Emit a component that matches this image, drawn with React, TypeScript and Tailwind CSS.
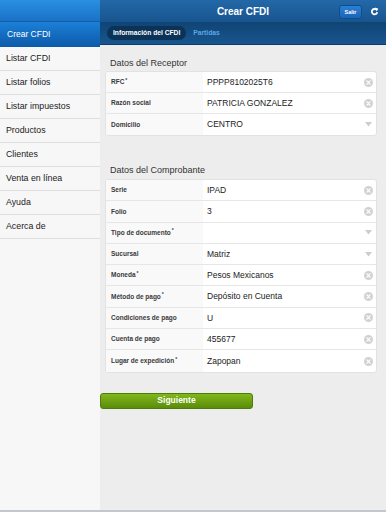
const font = { fontFamily: '"Liberation Sans", Arial, sans-serif' };

const menu = [
  'Crear CFDI',
  'Listar CFDI',
  'Listar folios',
  'Listar impuestos',
  'Productos',
  'Clientes',
  'Venta en línea',
  'Ayuda',
  'Acerca de',
];

type Row = { label: string; req?: boolean; value: string; kind: 'clear' | 'select' };

const receptor: Row[] = [
  { label: 'RFC', req: true, value: 'PPPP8102025T6', kind: 'clear' },
  { label: 'Razón social', value: 'PATRICIA GONZALEZ', kind: 'clear' },
  { label: 'Domicilio', value: 'CENTRO', kind: 'select' },
];

const comprobante: Row[] = [
  { label: 'Serie', value: 'IPAD', kind: 'clear' },
  { label: 'Folio', value: '3', kind: 'clear' },
  { label: 'Tipo de documento', req: true, value: '', kind: 'select' },
  { label: 'Sucursal', value: 'Matriz', kind: 'select' },
  { label: 'Moneda', req: true, value: 'Pesos Mexicanos', kind: 'clear' },
  { label: 'Método de pago', req: true, value: 'Depósito en Cuenta', kind: 'clear' },
  { label: 'Condiciones de pago', value: 'U', kind: 'clear' },
  { label: 'Cuenta de pago', value: '455677', kind: 'clear' },
  { label: 'Lugar de expedición', req: true, value: 'Zapopan', kind: 'clear' },
];

function ClearIcon() {
  return (
    <svg width="9" height="9" viewBox="0 0 10 10">
      <circle cx="5" cy="5" r="5" fill="#d2d2d2" />
      <path d="M3.2 3.2l3.6 3.6M6.8 3.2l-3.6 3.6" stroke="#fff" strokeWidth="1.3" strokeLinecap="round" />
    </svg>
  );
}

function SelectIcon() {
  return (
    <svg width="7" height="5" viewBox="0 0 7 5">
      <path d="M0 0h7L3.5 4.5z" fill="#cdcdcd" />
    </svg>
  );
}

function Card({ rows, rowH }: { rows: Row[]; rowH: string }) {
  return (
    <div className="mx-[5px] bg-white rounded-[3px] border border-[#e2e2e2] overflow-hidden">
      {rows.map((r, i) => (
        <div
          key={r.label}
          className={`flex ${rowH} ${i < rows.length - 1 ? 'border-b border-[#e6e6e6]' : ''}`}
        >
          <div className="w-[97px] shrink-0 bg-[#f9f9f9] flex items-center pl-[5px] text-[6.5px] font-bold text-[#3a3a3a]">
            {r.label}
            {r.req && <sup className="text-[5px] ml-[1px]">*</sup>}
          </div>
          <div className="flex-1 flex items-center pl-[4px] pr-[3px] text-[8.5px] text-[#222]">
            <span className="flex-1">{r.value}</span>
            <span className="w-[10px] flex justify-center">
              {r.kind === 'clear' ? <ClearIcon /> : <SelectIcon />}
            </span>
          </div>
        </div>
      ))}
    </div>
  );
}

export default function App() {
  return (
    <div className="w-[386px] h-[512px] flex flex-col overflow-hidden bg-[#ededed]" style={font}>
      <div className="flex flex-1 min-h-0">
        {/* Sidebar */}
        <div className="w-[100px] shrink-0 flex flex-col bg-[#f7f7f7]">
          <div className="h-[22px] bg-gradient-to-b from-[#2a8fe0] to-[#1a72c6] border-b border-[#155ea6]" />
          <div className="h-[25px] flex items-center pl-[7px] text-[8.5px] text-white bg-gradient-to-b from-[#1c80d8] to-[#0c5aa9]">
            Crear CFDI
          </div>
          {menu.slice(1).map((m) => (
            <div
              key={m}
              className="h-[24px] flex items-center pl-[6px] text-[8.8px] text-[#222] border-b border-[#dedede]"
            >
              {m}
            </div>
          ))}
        </div>

        {/* Main */}
        <div className="flex-1 flex flex-col">
          <div className="h-[22px] flex items-center relative bg-gradient-to-b from-[#2368a8] to-[#18558f]">
            <div className="flex-1 text-center text-white font-bold text-[10px]">Crear CFDI</div>
            <div className="absolute right-[24px] top-[5px] w-[23px] h-[14px] rounded-[3px] bg-gradient-to-b from-[#2a80d4] to-[#1865b5] border border-[#104d8c] flex items-center justify-center text-[5.5px] font-bold text-white">
              Salir
            </div>
            <svg className="absolute right-[7px] top-[7px]" width="8" height="9" viewBox="0 0 8 9">
              <path d="M6.2 5.2A2.7 2.7 0 1 1 5.3 2.6" fill="none" stroke="#fff" strokeWidth="1.8" />
              <path d="M4 0.6L7.4 1.8 5.6 4.6z" fill="#fff" />
            </svg>
          </div>
          <div className="h-[23px] flex items-center gap-[7px] pl-[7px] bg-gradient-to-b from-[#104474] to-[#18568f] border-b border-[#0d3a66]">
            <div className="h-[14px] px-[6px] rounded-full bg-[#0b3358] flex items-center text-[6.7px] font-bold text-white">
              Información del CFDI
            </div>
            <div className="text-[6.7px] font-bold text-[#5ea6e6]">Partidas</div>
          </div>

          <div className="pt-[12px] pr-[4px]">
            <div className="pl-[10px] text-[9px] text-[#333] h-[13px] leading-[13px]">Datos del Receptor</div>
            <div className="mt-[1px]">
              <Card rows={receptor} rowH="h-[21px]" />
            </div>
            <div className="pl-[10px] text-[9px] text-[#333] mt-[28px] h-[13px] leading-[13px]">
              Datos del Comprobante
            </div>
            <div className="mt-[2px]">
              <Card rows={comprobante} rowH="h-[21.3px]" />
            </div>
            <div className="mt-[20px]">
              <div className="w-[153px] h-[16px] rounded-[3px] bg-gradient-to-b from-[#80b81a] to-[#5b8c0a] border border-[#4f7a0c] flex items-center justify-center text-white font-bold text-[8.5px]">
                Siguiente
              </div>
            </div>
          </div>
        </div>
      </div>
      <div className="h-[2px] bg-[#c3c7cf]" />
    </div>
  );
}
